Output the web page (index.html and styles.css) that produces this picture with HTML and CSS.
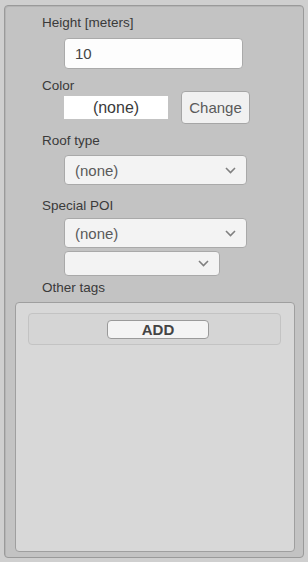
FILE: index.html
```html
<!DOCTYPE html>
<html lang="en">
<head>
    <meta charset="UTF-8">
    <meta name="viewport" content="width=device-width, initial-scale=1.0">
    <title>Building properties</title>
    <link rel="stylesheet" href="styles.css">
</head>
<body>

<div class="panel">
    <div class="fields">
        <!-- Height -->
        <div class="label label-first">Height [meters]</div>
        <input class="text-input" type="text" value="10">

        <!-- Color -->
        <div class="label label-color">Color</div>
        <div class="color-row">
            <div class="color-box">(none)</div>
            <button class="btn-change">Change</button>
        </div>

        <!-- Roof type -->
        <div class="label label-roof">Roof type</div>
        <div class="select select-roof">
            <span>(none)</span>
            <svg class="chevron" width="11" height="7" viewBox="0 0 11 7"><path d="M1 1 L5.5 5.5 L10 1" fill="none" stroke="#808080" stroke-width="1.6"/></svg>
        </div>

        <!-- Special POI -->
        <div class="label label-poi">Special POI</div>
        <div class="select select-poi">
            <span>(none)</span>
            <svg class="chevron" width="11" height="7" viewBox="0 0 11 7"><path d="M1 1 L5.5 5.5 L10 1" fill="none" stroke="#808080" stroke-width="1.6"/></svg>
        </div>
        <div class="select select-sub">
            <span></span>
            <svg class="chevron" width="11" height="7" viewBox="0 0 11 7"><path d="M1 1 L5.5 5.5 L10 1" fill="none" stroke="#808080" stroke-width="1.6"/></svg>
        </div>

        <div class="label label-tags">Other tags</div>
    </div>

    <div class="tags-box">
        <div class="tags-row">
            <button class="btn-add">ADD</button>
        </div>
    </div>
</div>

</body>
</html>
```

FILE: styles.css
```css
body {
    font-family: "Liberation Sans", Arial, sans-serif;
    margin: 0;
    padding: 5px 4px 4px 4px;
    background-color: #cfcfcf;
    color: #333;
}

.panel {
    box-sizing: border-box;
    width: 300px;
    height: 553px;
    display: flex;
    flex-direction: column;
    padding: 11px 8px 5px 10px;
    background-color: #c3c3c3;
    border: 1px solid #9a9a9a;
    border-radius: 4px;
    box-shadow: inset 1px 1px 0 #b4b4b4;
}

.fields {
    display: flex;
    flex-direction: column;
    align-items: flex-start;
    padding-left: 27px;
}

.label {
    font-size: 13.5px;
    line-height: 12px;
    color: #3a3a3a;
}

.label-color { margin-top: 11px; }
.label-roof { margin-top: 11px; }
.label-poi { margin-top: 15px; }
.label-tags { margin-top: 6px; }

.text-input {
    box-sizing: border-box;
    margin: 9px 0 0 22px;
    width: 179px;
    height: 31px;
    padding: 0 10px;
    font-family: inherit;
    font-size: 15px;
    color: #444;
    background-color: #fdfdfd;
    border: 1px solid #aaa;
    border-radius: 4px;
    outline: none;
}

.color-row {
    display: flex;
    align-items: center;
    gap: 13px;
    margin: -1px 0 0 22px;
    height: 33px;
}

.color-box {
    width: 104px;
    height: 23px;
    line-height: 23px;
    text-align: center;
    font-size: 16px;
    color: #3a3a3a;
    background-color: #fff;
}

.btn-change {
    box-sizing: border-box;
    width: 69px;
    height: 33px;
    padding: 0;
    font-family: inherit;
    font-size: 15px;
    color: #5a5a5a;
    background-color: #f1f1f1;
    border: 1px solid #a6a6a6;
    border-radius: 4px;
}

.select {
    box-sizing: border-box;
    display: flex;
    align-items: center;
    justify-content: space-between;
    margin-left: 22px;
    padding: 0 10px 0 10px;
    font-size: 15px;
    color: #5a5a5a;
    background-color: #f3f3f3;
    border: 1px solid #a9a9a9;
    border-radius: 4px;
}

.select-roof {
    margin-top: 8px;
    width: 183px;
    height: 30px;
}

.select-poi {
    margin-top: 6px;
    width: 183px;
    height: 30px;
}

.select-sub {
    margin-top: 3px;
    width: 156px;
    height: 25px;
}

.chevron {
    display: block;
}

.tags-box {
    box-sizing: border-box;
    flex: 1;
    margin-top: 8px;
    padding: 10px 13px 0 12px;
    background-color: #d8d8d8;
    border: 1px solid #9f9f9f;
    border-radius: 4px;
}

.tags-row {
    box-sizing: border-box;
    display: flex;
    align-items: center;
    justify-content: center;
    height: 32px;
    background-color: #d5d5d5;
    border: 1px solid #c3c3c3;
    border-radius: 4px;
}

.btn-add {
    box-sizing: border-box;
    width: 102px;
    height: 19px;
    padding: 0;
    margin-left: 7px;
    font-family: inherit;
    font-size: 15px;
    font-weight: bold;
    line-height: 17px;
    color: #444;
    background-color: #f4f4f4;
    border: 1px solid #9a9a9a;
    border-radius: 4px;
}
```
